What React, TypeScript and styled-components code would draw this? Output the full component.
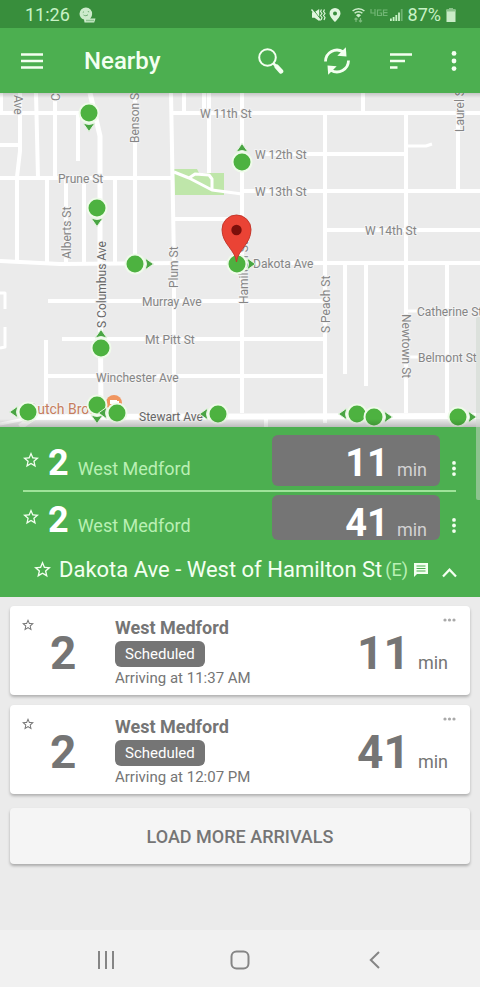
import React from "react";
import styled, { createGlobalStyle } from "styled-components";

const GlobalStyle = createGlobalStyle`
  * { box-sizing: border-box; }
  html, body, #root { height: 100%; }
  body { margin: 0; background: #ebebeb; font-family: Roboto, "Liberation Sans", sans-serif; }
  button { margin: 0; padding: 0; border: 0; background: none; color: inherit; font: inherit; cursor: pointer; }
  svg { display: block; }
`;

const Screen = styled.div`
  display: flex;
  flex-direction: column;
  min-height: 100%;
`;

const StatusBar = styled.div`
  display: flex;
  align-items: center;
  justify-content: space-between;
  height: 28px;
  padding: 2px 24px 0 25px;
  background: #388e3c;
  color: #c8f2c6;
  font-size: 18px;
  line-height: 24px;
`;

const StatusGroup = styled.div<{ $gap: number }>`
  display: flex;
  align-items: center;
  gap: ${(p) => p.$gap}px;
`;

const Toolbar = styled.header`
  display: flex;
  align-items: center;
  height: 65px;
  padding: 1px 23px 0 21px;
  background: #4caf50;
  color: #f3fff0;
`;

const Title = styled.h1`
  flex: 1;
  margin: 0 0 0 41px;
  font-size: 24px;
  line-height: 32px;
  font-weight: 500;
`;

const Actions = styled.div`
  display: flex;
  align-items: center;
  gap: 39px;
`;

const IconButton = styled.button`
  display: flex;
  align-items: center;
  justify-content: center;
  flex: none;
`;

const Body = styled.main`
  position: relative;
  flex: 1;
`;

const ScrollThumb = styled.div`
  position: absolute;
  top: 224px;
  right: 0;
  width: 4px;
  height: 183px;
  border-radius: 2px 0 0 2px;
  background: rgba(205, 215, 205, 0.5);
`;

const MapArea = styled.section`
  height: 334px;
  overflow: hidden;
  background: #ebebeb;
`;

const MapSvg = styled.svg`
  width: 100%;
  height: 100%;
  text {
    font-family: Roboto, "Liberation Sans", sans-serif;
    font-size: 12px;
    fill: #858585;
    stroke: #f3f3f3;
    stroke-width: 2px;
    paint-order: stroke;
  }
`;

const StopHeader = styled.section`
  padding-bottom: 7px;
  background: #4caf50;
  color: #f3fff0;
`;

const HeaderRow = styled.div<{ $divided?: boolean }>`
  display: flex;
  align-items: flex-start;
  height: ${(p) => (p.$divided ? 65 : 48)}px;
  margin: 0 24px 0 23px;
  padding-top: ${(p) => (p.$divided ? 8 : 3)}px;
  border-bottom: ${(p) => (p.$divided ? "2px solid #9fe39a" : "0")};
`;

const HeaderRoute = styled.div<{ $top: number }>`
  display: flex;
  flex: 1;
  align-items: baseline;
  padding-top: ${(p) => p.$top}px;
`;

const RouteStar = styled(IconButton)`
  align-self: flex-start;
  margin-top: 10px;
`;

const RouteNumber = styled.strong`
  margin: 0 9px 0 9px;
  font-size: 36px;
  line-height: 42px;
  font-weight: 700;
  color: #fff;
`;

const RouteName = styled.span`
  font-size: 18px;
  line-height: 24px;
  color: #b9f0b4;
`;

const EtaPill = styled.div<{ $height: number }>`
  display: flex;
  align-items: baseline;
  justify-content: flex-end;
  width: 168px;
  height: ${(p) => p.$height}px;
  padding: 6px 13px 0 0;
  border-radius: 6px;
  background: #757575;
  color: #fff;
`;

const PillMinutes = styled.strong`
  font-size: 38px;
  line-height: 44px;
  font-weight: 700;
`;

const Unit = styled.span<{ $color: string }>`
  margin-left: 8px;
  font-size: 18px;
  line-height: 24px;
  color: ${(p) => p.$color};
`;

const RowMenu = styled(IconButton)<{ $top: number }>`
  width: 8px;
  height: 20px;
  margin: ${(p) => p.$top}px -2px 0 10px;
`;

const StopRow = styled.div`
  display: flex;
  align-items: center;
  height: 50px;
  padding: 9px 23px 0 34px;
`;

const StopName = styled.h2`
  margin: 0 0 0 8px;
  font-size: 22px;
  line-height: 28px;
  font-weight: 400;
  white-space: nowrap;
`;

const Direction = styled.span`
  flex: 1;
  margin-left: 3px;
  font-size: 18px;
  line-height: 28px;
  color: #b9f0b4;
`;

const Arrivals = styled.section`
  display: flex;
  flex-direction: column;
  gap: 10px;
  padding: 9px 10px 20px;
`;

const Card = styled.article`
  display: grid;
  grid-template-columns: 40px 65px 1fr auto;
  height: 89px;
  border-radius: 4px;
  background: #fff;
  box-shadow: 0 2px 3px rgba(0, 0, 0, 0.25);
  color: #757575;
`;

const CardStar = styled(IconButton)`
  align-self: start;
  width: 14px;
  margin: 13px 0 0 11px;
`;

const CardRoute = styled.strong`
  padding-top: 20px;
  font-size: 46px;
  line-height: 54px;
  font-weight: 700;
`;

const CardInfo = styled.div`
  display: flex;
  flex-direction: column;
  align-items: flex-start;
  padding-top: 10px;
`;

const CardName = styled.h3`
  margin: 0;
  font-size: 18px;
  line-height: 24px;
  font-weight: 700;
`;

const Badge = styled.span`
  margin: 1px 0;
  padding: 1px 10px 0;
  border-radius: 6px;
  background: #757575;
  color: #fff;
  font-size: 15px;
  line-height: 25px;
`;

const ArrivalTime = styled.span`
  font-size: 15px;
  line-height: 20px;
`;

const CardSide = styled.div`
  display: flex;
  flex-direction: column;
  align-items: flex-end;
  padding: 10px 14px 0 0;
`;

const CardEta = styled.div`
  display: flex;
  align-items: baseline;
  margin: 2px 8px 0 0;
`;

const CardMinutes = styled.strong`
  font-size: 46px;
  line-height: 54px;
  font-weight: 700;
`;

const LoadMore = styled.button`
  height: 56px;
  margin-top: 4px;
  border-radius: 4px;
  background: #f5f5f5;
  box-shadow: 0 2px 3px rgba(0, 0, 0, 0.28);
  color: #757575;
  font-size: 18px;
  font-weight: 500;
`;

const NavBar = styled.nav`
  display: flex;
  align-items: center;
  justify-content: space-around;
  height: 57px;
  padding: 2px 39px 0;
  background: #f1f1f1;
`;

const NavButton = styled(IconButton)`
  flex: 1;
  height: 48px;
`;

const Star = ({ size, color }: { size: number; color: string }) => (
  <svg width={size} height={size} viewBox="2 2 20 20" fill={color} aria-hidden="true">
    <path d="M22 9.24l-7.19-.62L12 2 9.19 8.63 2 9.24l5.46 4.73L5.82 21 12 17.27 18.18 21l-1.63-7.03L22 9.24zM12 15.4l-3.76 2.27 1-4.28-3.32-2.88 4.38-.38L12 6.1l1.71 4.04 4.38.38-3.32 2.88 1 4.28L12 15.4z" />
  </svg>
);

const Dots = ({ height, r }: { height: number; r: number }) => (
  <svg width="6" height={height} viewBox={`0 0 6 ${height}`} fill="currentColor" aria-hidden="true">
    <circle cx="3" cy={r} r={r} />
    <circle cx="3" cy={height / 2} r={r} />
    <circle cx="3" cy={height - r} r={r} />
  </svg>
);

const MascotIcon = () => (
  <svg width="18" height="17" viewBox="0 0 18 17" aria-hidden="true">
    <path d="M7 .5a6.3 6.3 0 0 1 6.1 6.8c-.1 2-.9 3.2-2 4.2H16.500l-1.300 4H5.500L5 12.500C2 11.800 .5 9.200 .5 6.700A6.300 6.300 0 0 1 7 .5z" fill="#cdebcc" />
    <path d="M3.800 5.500l1.200-.8M8.800 4.500l1.400.4M4.500 8c1.400 1 3.200.9 4.500-.3" stroke="#6fae73" strokeWidth="1" fill="none" />
    <path d="M7 13.500h8" stroke="#8fc491" strokeWidth="1.500" />
  </svg>
);

const MuteIcon = () => (
  <svg width="15" height="14" viewBox="0 0 15 14" aria-hidden="true">
    <path d="M1 4.200h2.500L8.200 1v12L3.500 9.800H1z" fill="#e0f6de" />
    <path d="M1.300 .5l8.500 11" stroke="#388e3c" strokeWidth="1" />
    <path d="M.5 1.500l9 11" stroke="#e0f6de" strokeWidth="1.300" />
    <path d="M10.500 1.500l-1 2 1.500 2-1.500 2 1.500 2-1 2.500M13.500 1.500l-1 2 1.500 2-1.500 2 1.500 2-1 2.500" stroke="#d8f3d6" strokeWidth="1.200" fill="none" />
  </svg>
);

const PlaceIcon = () => (
  <svg width="12" height="14" viewBox="0 0 12 14" aria-hidden="true">
    <path fillRule="evenodd" d="M6 0a5.500 5.500 0 0 1 5.500 5.500C11.500 9 6 14 6 14S.5 9 .5 5.500A5.500 5.500 0 0 1 6 0zm0 3.500a2 2 0 1 0 0 4 2 2 0 0 0 0-4z" fill="#e0f6de" />
  </svg>
);

const WifiIcon = () => (
  <svg width="13" height="16" viewBox="0 0 13 16" fill="none" aria-hidden="true">
    <path d="M.6 4a8.600 8.600 0 0 1 11.800 0M2.600 6.300a5.600 5.600 0 0 1 7.800 0" stroke="#cdeecb" strokeWidth="1.500" />
    <path d="M4 8.300a3.600 3.600 0 0 1 5 0L6.500 10.500z" fill="#cdeecb" />
    <path d="M4 15v-4M2.500 12.500L4 11l1.500 1.500M8.500 11v4M7 13.500L8.500 15l1.500-1.500" stroke="#7dbb7e" strokeWidth="1.200" />
  </svg>
);

const NetworkIcon = () => (
  <svg width="18" height="13" viewBox="0 0 18 13" fill="none" stroke="#70b573" strokeWidth="1.200" aria-hidden="true">
    <path d="M1 0v4h4.500M5 0v7M11.500 1H7.500v5.500h4V4h-2M17.500 1h-4v5.500h4M13.500 3.700h4" />
  </svg>
);

const SignalIcon = () => (
  <svg width="13" height="12" viewBox="0 0 13 12" aria-hidden="true">
    <path d="M0 9.500h1.800V12H0zM2.700 8h1.800v4H2.700zM5.400 6h1.800v6H5.400zM8.100 3.500h1.800V12H8.100z" fill="#c8f2c6" />
    <path d="M10.800 0h1.800v12h-1.800z" fill="#6fb272" />
  </svg>
);

const BatteryIcon = () => (
  <svg width="10" height="14" viewBox="0 0 10 14" aria-hidden="true">
    <path d="M3 0h4v1.500h2.500V14H.5V1.500H3z" fill="#c9ecc7" />
    <path d="M3 0h4v1.500h2.500V3.500H.5v-2H3z" fill="#8bc38b" />
  </svg>
);

const MenuIcon = () => (
  <svg width="22" height="16" viewBox="0 0 22 16" stroke="currentColor" strokeWidth="2.300" aria-hidden="true">
    <path d="M0 1.500h22M0 8h22M0 14.500h22" />
  </svg>
);

const SearchIcon = () => (
  <svg width="26" height="26" viewBox="0 0 26 26" fill="none" stroke="currentColor" aria-hidden="true">
    <circle cx="9.500" cy="9.500" r="8.300" strokeWidth="2" />
    <path d="M15.500 15.500l3 3" strokeWidth="2.500" />
    <path d="M18.800 18.800l4.200 4.600" strokeWidth="4.600" strokeLinecap="round" />
  </svg>
);

const RefreshIcon = () => (
  <svg width="28" height="28" viewBox="0 0 28 28" aria-hidden="true">
    <path d="M2.500 14.500A11.500 11.500 0 0 1 20 4.800" fill="none" stroke="currentColor" strokeWidth="2.800" />
    <path d="M25.500 13.500A11.500 11.500 0 0 1 8 23.200" fill="none" stroke="currentColor" strokeWidth="2.800" />
    <path d="M22.800 .3l.7 9.200-9.200-.8z" fill="currentColor" />
    <path d="M5.200 27.700l-.7-9.200 9.200.8z" fill="currentColor" />
  </svg>
);

const SortIcon = () => (
  <svg width="22" height="16" viewBox="0 0 22 16" stroke="currentColor" strokeWidth="2.300" aria-hidden="true">
    <path d="M0 1.500h22M0 8h15M0 14.500h7.500" />
  </svg>
);

const CommentIcon = () => (
  <svg width="14" height="14" viewBox="0 0 14 14" aria-hidden="true">
    <path d="M0 0h14v11H3l-3 3z" fill="currentColor" />
    <path d="M2.500 3h9M2.500 5.500h9M2.500 8h9" stroke="#4caf50" strokeWidth="1.200" />
  </svg>
);

const ChevronUp = () => (
  <svg width="15" height="16" viewBox="0 0 15 16" fill="none" stroke="currentColor" strokeWidth="2.200" aria-hidden="true">
    <path d="M1 14.500l6.500-6.800 6.500 6.800" />
  </svg>
);

const MoreHorizontal = () => (
  <svg width="13" height="8" viewBox="0 0 13 8" fill="#a9a9a9" aria-hidden="true">
    <circle cx="2" cy="4" r="1.600" />
    <circle cx="6.500" cy="4" r="1.600" />
    <circle cx="11" cy="4" r="1.600" />
  </svg>
);

type Heading = "N" | "S" | "E" | "W";
const headingAngle: Record<Heading, number> = { N: 0, E: 90, S: 180, W: 270 };

const BusStop = ({ x, y, heading }: { x: number; y: number; heading: Heading }) => (
  <g transform={`translate(${x} ${y})`}>
    <path
      transform={`rotate(${headingAngle[heading]})`}
      d="M0-18.500l6 8.500q-6-3-12 0z"
      fill="#4aa544"
      stroke="#e2f5dd"
      strokeWidth="1"
    />
    <circle r="9.500" fill="#4db240" stroke="#effbea" strokeWidth="2" />
  </g>
);

const stops: { x: number; y: number; heading: Heading }[] = [
  { x: 89, y: 113, heading: "S" },
  { x: 242, y: 162, heading: "N" },
  { x: 97, y: 208, heading: "S" },
  { x: 135, y: 264, heading: "E" },
  { x: 237, y: 264, heading: "E" },
  { x: 101, y: 348, heading: "N" },
  { x: 28, y: 412, heading: "W" },
  { x: 97, y: 405, heading: "S" },
  { x: 117, y: 413, heading: "W" },
  { x: 218, y: 414, heading: "W" },
  { x: 357, y: 414, heading: "W" },
  { x: 374, y: 417, heading: "E" },
  { x: 458, y: 417, heading: "E" },
];

const streets = [
  { name: "W 11th St", x: 200, y: 118 },
  { name: "W 12th St", x: 255, y: 159 },
  { name: "W 13th St", x: 255, y: 196 },
  { name: "W 14th St", x: 365, y: 235 },
  { name: "Prune St", x: 58, y: 183 },
  { name: "Dakota Ave", x: 253, y: 268 },
  { name: "Murray Ave", x: 142, y: 306 },
  { name: "Mt Pitt St", x: 145, y: 344 },
  { name: "Winchester Ave", x: 96, y: 382 },
  { name: "Catherine St", x: 417, y: 316 },
  { name: "Belmont St", x: 418, y: 362 },
];

const verticalStreets = [
  { name: "Benson St", x: 139, y: 143, angle: -90 },
  { name: "Alberts St", x: 71, y: 259, angle: -90 },
  { name: "Plum St", x: 178, y: 288, angle: -90 },
  { name: "Hamilton St", x: 248, y: 304, angle: -90 },
  { name: "S Peach St", x: 330, y: 333, angle: -90 },
  { name: "Laurel St", x: 464, y: 132, angle: -90 },
  { name: "Ct", x: 60, y: 101, angle: -90 },
  { name: "Newtown St", x: 402, y: 314, angle: 90 },
  { name: "Ave", x: 14, y: 95, angle: 90 },
];

const StreetMap = () => (
  <MapSvg viewBox="0 93 480 334" preserveAspectRatio="xMidYMid slice" role="img" aria-label="Map of nearby stops">
    <defs>
      <linearGradient id="topShade" x1="0" y1="0" x2="0" y2="1">
        <stop offset="0" stopColor="#000" stopOpacity="0.16" />
        <stop offset="1" stopColor="#000" stopOpacity="0" />
      </linearGradient>
      <linearGradient id="bottomShade" x1="0" y1="1" x2="0" y2="0">
        <stop offset="0" stopColor="#000" stopOpacity="0.2" />
        <stop offset="1" stopColor="#000" stopOpacity="0" />
      </linearGradient>
    </defs>
    <path d="M174 169h23l2 4h25v22h-49z" fill="#bfe6aa" />
    <g fill="none" stroke="#fff" strokeWidth="4" strokeLinejoin="round">
      <path d="M0 113h79M170 113h310M0 145h20M0 178h174M242 191h238" />
      <path d="M209 93v80M256 154h150M326 230h154M174 219h64" />
      <path d="M174 172l15 6 23 12 30 4M189 178l6-4 14 1 3 4v11" strokeWidth="3" />
      <path d="M0 261l60 3 120-1h300M48 301h278M62 339h264M48 376h278" />
      <path d="M406 146h20l6-2M406 311h12M406 357h14M0 293h5v16M5 327v20l-5 1" strokeWidth="3" />
      <path d="M1 93v20M20 93v58l-3 26v84M36 93l2 85M55 93v85M47 178v84M66 178v84M84 178v84M115 178v84" />
      <path d="M78 113v48M46 340v72M135 93v170M171 93l3 170v150M184 93v20M204 93v20" />
      <path d="M242 93v320M363 93v20M325 113v310M406 113v300M458 113v78M345 264v110M366 264v122M447 264v150" />
      <path d="M266 418v9" />
      <path d="M90 93l10 43v127l1 155" strokeWidth="5" />
      <path d="M20 427l14-10 446-1" strokeWidth="6" />
      <path d="M0 424l25-5" strokeWidth="3" />
    </g>
    {streets.map((s) => (
      <text key={s.name} x={s.x} y={s.y}>
        {s.name}
      </text>
    ))}
    {verticalStreets.map((s) => (
      <text key={s.name} transform={`translate(${s.x} ${s.y}) rotate(${s.angle})`}>
        {s.name}
      </text>
    ))}
    <text transform="translate(106 328) rotate(-90)" style={{ fill: "#666" }}>
      S Columbus Ave
    </text>
    <text x="139" y="421" style={{ fill: "#666" }}>
      Stewart Ave
    </text>
    <text x="28" y="414" style={{ fill: "#c67d5e", fontSize: "14px" }}>
      Dutch Bros
    </text>
    <circle cx="114" cy="403" r="8" fill="#f0955f" />
    <path d="M110 400h7v4h-7zM117 401h2v2h-2" fill="#fff" />
    {stops.map((s) => (
      <BusStop key={`${s.x}-${s.y}`} x={s.x} y={s.y} heading={s.heading} />
    ))}
    <path
      d="M236.500 262c-1-12-14.500-18-14.500-32.500a14.500 14.500 0 0 1 29 0c0 14.500-13.500 20.500-14.500 32.500z"
      fill="#ea4335"
      stroke="#c5362b"
      strokeWidth="1"
    />
    <circle cx="236.500" cy="230" r="5.200" fill="#7c0f0b" />
    <rect x="0" y="93" width="480" height="5" fill="url(#topShade)" />
    <rect x="0" y="419" width="480" height="8" fill="url(#bottomShade)" />
  </MapSvg>
);

const arrivals = [
  { route: "2", name: "West Medford", minutes: "11", time: "11:37 AM" },
  { route: "2", name: "West Medford", minutes: "41", time: "12:07 PM" },
];

export default function App() {
  return (
    <Screen>
      <GlobalStyle />
      <StatusBar>
        <StatusGroup $gap={9}>
          <span>11:26</span>
          <MascotIcon />
        </StatusGroup>
        <StatusGroup $gap={5}>
          <StatusGroup $gap={3}>
            <MuteIcon />
            <PlaceIcon />
          </StatusGroup>
          <StatusGroup $gap={4}>
            <svg width="2" height="1" aria-hidden="true" />
            <WifiIcon />
          </StatusGroup>
          <StatusGroup $gap={2}>
            <NetworkIcon />
            <SignalIcon />
          </StatusGroup>
          <span>87%</span>
          <BatteryIcon />
        </StatusGroup>
      </StatusBar>
      <Toolbar>
        <IconButton aria-label="Open menu">
          <MenuIcon />
        </IconButton>
        <Title>Nearby</Title>
        <Actions>
          <IconButton aria-label="Search">
            <SearchIcon />
          </IconButton>
          <IconButton aria-label="Refresh">
            <RefreshIcon />
          </IconButton>
          <IconButton aria-label="Sort">
            <SortIcon />
          </IconButton>
          <IconButton aria-label="More options">
            <Dots height={20} r={2.4} />
          </IconButton>
        </Actions>
      </Toolbar>
      <Body>
        <MapArea>
          <StreetMap />
        </MapArea>
        <StopHeader>
          {arrivals.map((a, i) => (
            <HeaderRow key={a.time} $divided={i === 0}>
              <HeaderRoute $top={i === 0 ? 7 : 4}>
                <RouteStar aria-label="Add route to favorites">
                  <Star size={16} color="#f3fff0" />
                </RouteStar>
                <RouteNumber>{a.route}</RouteNumber>
                <RouteName>{a.name}</RouteName>
              </HeaderRoute>
              <EtaPill $height={i === 0 ? 51 : 45}>
                <PillMinutes>{a.minutes}</PillMinutes>
                <Unit $color="#d2d2d2">min</Unit>
              </EtaPill>
              <RowMenu aria-label="Arrival options" $top={i === 0 ? 23 : 20}>
                <Dots height={15} r={1.9} />
              </RowMenu>
            </HeaderRow>
          ))}
          <StopRow>
            <IconButton aria-label="Add stop to favorites">
              <Star size={17} color="#f3fff0" />
            </IconButton>
            <StopName>Dakota Ave - West of Hamilton St</StopName>
            <Direction>(E)</Direction>
            <StatusGroup $gap={14}>
              <IconButton aria-label="Stop alerts">
                <CommentIcon />
              </IconButton>
              <IconButton aria-label="Collapse">
                <ChevronUp />
              </IconButton>
            </StatusGroup>
          </StopRow>
        </StopHeader>
        <Arrivals>
          {arrivals.map((a) => (
            <Card key={a.time}>
              <CardStar aria-label="Add route to favorites">
                <Star size={12} color="#757575" />
              </CardStar>
              <CardRoute>{a.route}</CardRoute>
              <CardInfo>
                <CardName>{a.name}</CardName>
                <Badge>Scheduled</Badge>
                <ArrivalTime>Arriving at {a.time}</ArrivalTime>
              </CardInfo>
              <CardSide>
                <IconButton aria-label="Arrival options">
                  <MoreHorizontal />
                </IconButton>
                <CardEta>
                  <CardMinutes>{a.minutes}</CardMinutes>
                  <Unit $color="#757575">min</Unit>
                </CardEta>
              </CardSide>
            </Card>
          ))}
          <LoadMore>LOAD MORE ARRIVALS</LoadMore>
        </Arrivals>
        <ScrollThumb />
      </Body>
      <NavBar>
        <NavButton aria-label="Recent apps">
          <svg width="18" height="18" viewBox="0 0 18 18" stroke="#858585" strokeWidth="2" aria-hidden="true">
            <path d="M2 0v18M9 0v18M16 0v18" />
          </svg>
        </NavButton>
        <NavButton aria-label="Home">
          <svg width="20" height="20" viewBox="0 0 20 20" fill="none" stroke="#858585" strokeWidth="2" aria-hidden="true">
            <rect x="1.500" y="1.500" width="17" height="17" rx="5" />
          </svg>
        </NavButton>
        <NavButton aria-label="Back">
          <svg width="11" height="18" viewBox="0 0 11 18" fill="none" stroke="#858585" strokeWidth="2" aria-hidden="true">
            <path d="M10 1L1.800 9l8.200 8" />
          </svg>
        </NavButton>
      </NavBar>
    </Screen>
  );
}
